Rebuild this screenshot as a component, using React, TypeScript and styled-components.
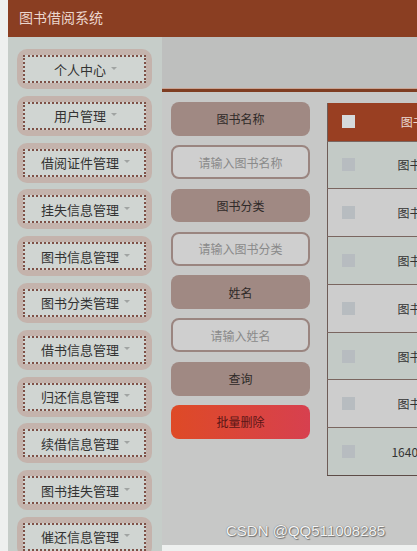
import styled, { createGlobalStyle } from "styled-components";

const GlobalStyle = createGlobalStyle`
  body {
    margin: 0 0 0 8px;
    background: #eef0ef;
    font-family: "Noto Sans CJK SC", "Noto Sans", sans-serif;
    overflow: hidden;
  }
`;

const menus = [
  "个人中心",
  "用户管理",
  "借阅证件管理",
  "挂失信息管理",
  "图书信息管理",
  "图书分类管理",
  "借书信息管理",
  "归还信息管理",
  "续借信息管理",
  "图书挂失管理",
  "催还信息管理",
];

const rows = ["图书名称1", "图书名称2", "图书名称3", "图书名称4", "图书名称5", "图书名称6", "1640000000"];

const App = () => {
  return (
    <>
      <GlobalStyle />
      <Page>
        <Header>
          <Title>图书借阅系统</Title>
        </Header>
        <Body>
          <Sidebar>
            {menus.map((m) => (
              <MenuItem key={m}>
                <MenuInner>
                  <span>{m}</span>
                  <Caret />
                </MenuInner>
              </MenuItem>
            ))}
          </Sidebar>
          <Main>
            <TopBlank />
            <Divider />
            <Content>
              <Form>
                <LabelBox>图书名称</LabelBox>
                <Input placeholder="请输入图书名称" />
                <LabelBox>图书分类</LabelBox>
                <Input placeholder="请输入图书分类" />
                <LabelBox>姓名</LabelBox>
                <Input placeholder="请输入姓名" />
                <LabelBox as="button">查询</LabelBox>
                <DeleteButton>批量删除</DeleteButton>
              </Form>
              <Table>
                <thead>
                  <tr>
                    <HeadCell $narrow>
                      <Check $head />
                    </HeadCell>
                    <HeadCell>图书名称</HeadCell>
                    <HeadCell>图书分类</HeadCell>
                  </tr>
                </thead>
                <tbody>
                  {rows.map((r, i) => (
                    <Row key={i} $alt={i % 2 === 1}>
                      <Cell $narrow>
                        <Check />
                      </Cell>
                      <Cell>{r}</Cell>
                      <Cell>文学</Cell>
                    </Row>
                  ))}
                </tbody>
              </Table>
            </Content>
          </Main>
        </Body>
        <Watermark>CSDN @QQ511008285</Watermark>
      </Page>
    </>
  );
};

export default App;

const Page = styled.div`
  position: relative;
  height: 551px;
  display: flex;
  flex-direction: column;
`;

const Header = styled.div`
  height: 37px;
  flex-shrink: 0;
  background: #8a3e22;
  display: flex;
  align-items: center;
  padding-left: 11px;
`;

const Title = styled.div`
  color: #ecd6cd;
  font-size: 14px;
  margin-top: -4px;
`;

const Body = styled.div`
  flex: 1;
  display: flex;
  min-height: 0;
`;

const Sidebar = styled.div`
  width: 154px;
  flex-shrink: 0;
  background: #c6cdc9;
  padding: 12px 0 0 9px;
  box-sizing: border-box;
  display: flex;
  flex-direction: column;
  gap: 6.8px;
  overflow: hidden;
`;

const MenuItem = styled.div`
  width: 135px;
  height: 40px;
  flex-shrink: 0;
  box-sizing: border-box;
  background: #c4b3ac;
  border-radius: 10px;
  padding: 6px;
`;

const MenuInner = styled.div`
  height: 100%;
  box-sizing: border-box;
  border: 2px dotted #7e5046;
  background: #d0d5d2;
  display: flex;
  align-items: center;
  justify-content: center;
  font-size: 13px;
  color: #333;
  padding-left: 2px;
`;

const Caret = styled.i`
  width: 0;
  height: 0;
  margin-left: 5px;
  margin-top: -2px;
  border-left: 3px solid transparent;
  border-right: 3px solid transparent;
  border-top: 3px solid #a0a4a2;
`;

const Main = styled.div`
  flex: 1;
  min-width: 0;
  overflow: hidden;
  background: #c7c8c7;
  display: flex;
  flex-direction: column;
  height: 508px;
`;

const TopBlank = styled.div`
  height: 51px;
  background: #bebfbe;
  flex-shrink: 0;
`;

const Divider = styled.div`
  height: 3px;
  background: #7f3d22;
  border-top: 1px solid #c9a393;
  flex-shrink: 0;
`;

const Content = styled.div`
  display: flex;
  align-items: flex-start;
  padding: 10px 0 0 9px;
`;

const Form = styled.div`
  width: 139px;
  flex-shrink: 0;
  display: flex;
  flex-direction: column;
  gap: 9.5px;
`;

const LabelBox = styled.div`
  height: 33.8px;
  border: none;
  border-radius: 8px;
  background: #a08983;
  color: #2f2a28;
  font-size: 12px;
  font-family: inherit;
  display: flex;
  align-items: center;
  justify-content: center;
  padding: 0;
`;

const Input = styled.input`
  height: 33.8px;
  box-sizing: border-box;
  border: 2px solid #9a8580;
  border-radius: 8px;
  background: #cfcfcf;
  font-family: inherit;
  font-size: 12px;
  text-align: center;
  outline: none;
  &::placeholder {
    color: #8a8a8a;
  }
`;

const DeleteButton = styled.button`
  height: 33.8px;
  border: none;
  border-radius: 8px;
  background: linear-gradient(90deg, #de4a26, #d7404f);
  color: #5b1616;
  font-family: inherit;
  font-size: 12px;
`;

const Table = styled.table`
  margin-left: 17px;
  margin-top: 1px;
  width: 260px;
  flex-shrink: 0;
  border-collapse: collapse;
  border-left: 1px solid #6e5c57;
  border-bottom: 1px solid #5d4c47;
  font-size: 12px;
`;

const HeadCell = styled.th<{ $narrow?: boolean }>`
  height: 38px;
  padding: 0;
  width: ${(p) => (p.$narrow ? "43px" : "114px")};
  background: #993f22;
  color: #eadbd4;
  font-weight: normal;
  text-align: ${(p) => (p.$narrow ? "left" : "center")};
  padding-left: ${(p) => (p.$narrow ? "14px" : "0")};
  box-sizing: border-box;
`;

const Row = styled.tr<{ $alt: boolean }>`
  background: ${(p) => (p.$alt ? "#cdcdcd" : "#c3cac6")};
  border-top: 1px solid #7a6660;
`;

const Cell = styled.td<{ $narrow?: boolean }>`
  height: 47.8px;
  padding: 0;
  padding-left: ${(p) => (p.$narrow ? "14px" : "0")};
  text-align: ${(p) => (p.$narrow ? "left" : "center")};
  color: #333;
  box-sizing: border-box;
`;

const Check = styled.div<{ $head?: boolean }>`
  width: 13px;
  height: 13px;
  background: ${(p) => (p.$head ? "#d6dadb" : "#b7bcc0")};
`;

const Watermark = styled.div`
  position: absolute;
  left: 218px;
  top: 522px;
  font-family: "Liberation Sans", Arial, sans-serif;
  font-size: 15px;
  color: #f4f4f4;
  text-shadow: 0 0 1px #555, 1px 1px 1px #777;
`;
